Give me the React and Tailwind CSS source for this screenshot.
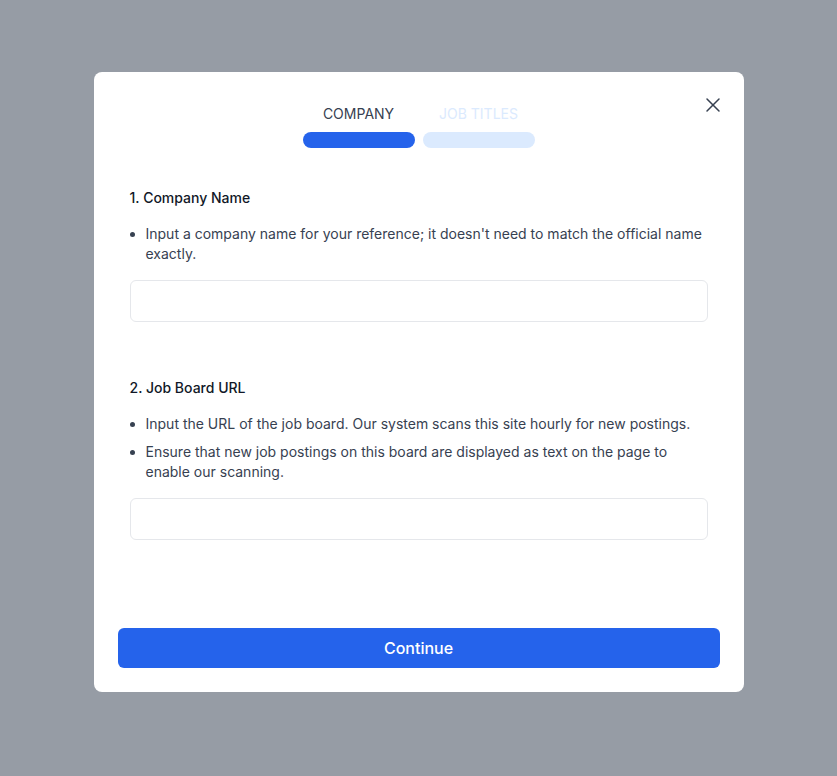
import React from "react";
import { X } from "lucide-react";

export default function App() {
  return (
    <div className="min-h-[776px] w-full bg-[#969ca5] flex justify-center pt-[72px]" style={{ fontFamily: "Inter, 'Noto Sans', sans-serif" }}>
      <div className="relative w-[650px] h-[620px] bg-white rounded-lg flex flex-col">
        <button className="absolute right-[19px] top-[21px] text-[#374151]">
          <X size={24} strokeWidth={1.5} />
        </button>
        <div className="flex justify-center gap-2 pt-8">
          <div className="flex flex-col items-center w-28">
            <span className="text-sm leading-5 text-[#374151]">COMPANY</span>
            <div className="mt-2 h-4 w-28 rounded-full bg-[#2563eb]"></div>
          </div>
          <div className="flex flex-col items-center w-28">
            <span className="text-sm leading-5 text-[#dbeafe]">JOB TITLES</span>
            <div className="mt-2 h-4 w-28 rounded-full bg-[#dbeafe]"></div>
          </div>
        </div>
        <div className="px-9 mt-10">
          <h3 className="text-sm leading-5 font-medium text-[#111827]">1. Company Name</h3>
          <ul className="list-disc pl-4 mt-4 text-sm leading-5 text-[#374151] flex flex-col gap-2">
            <li>Input a company name for your reference; it doesn't need to match the official name exactly.</li>
          </ul>
          <input className="mt-4 block w-full h-[42px] rounded-md border border-[#e5e7eb] outline-none" />
          <h3 className="mt-[56px] text-sm leading-5 font-medium text-[#111827]">2. Job Board URL</h3>
          <ul className="list-disc pl-4 mt-4 text-sm leading-5 text-[#374151] flex flex-col gap-2">
            <li>Input the URL of the job board. Our system scans this site hourly for new postings.</li>
            <li>Ensure that new job postings on this board are displayed as text on the page to enable our scanning.</li>
          </ul>
          <input className="mt-4 block w-full h-[42px] rounded-md border border-[#e5e7eb] outline-none" />
        </div>
        <div className="mt-auto px-6 pb-6">
          <button className="w-full h-10 rounded-md bg-[#2563eb] text-white text-base font-medium">Continue</button>
        </div>
      </div>
    </div>
  );
}
